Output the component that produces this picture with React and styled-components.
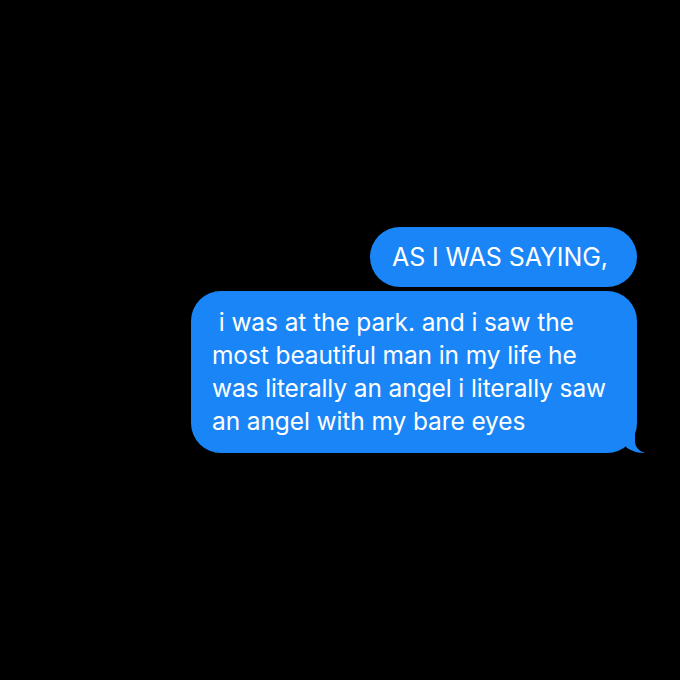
import React from "react";
import styled, { createGlobalStyle } from "styled-components";

const Global = createGlobalStyle`
  html, body {
    margin: 0;
    background: #000;
  }
`;

const Screen = styled.div`
  width: 680px;
  height: 680px;
  background: #000;
  display: flex;
  flex-direction: column;
  align-items: flex-end;
  gap: 4px;
  padding: 227px 43px 0 0;
  box-sizing: border-box;
  font-family: Inter, "Liberation Sans", sans-serif;
`;

const Bubble = styled.div`
  position: relative;
  background: #1a85f7;
  color: #fff;
  font-size: ${(p) => p.size}px;
  line-height: ${(p) => p.lh}px;
  letter-spacing: -0.1px;
  border-radius: 30px;
  padding: ${(p) => p.pad};
  width: ${(p) => p.w}px;
  box-sizing: border-box;
  white-space: pre-wrap;
`;

const Tail = styled.svg`
  position: absolute;
  right: -9px;
  bottom: 0;
`;

const App = () => {
  return (
    <>
      <Global />
      <Screen>
        <Bubble w={267} size={25} lh={32} pad="14px 0 14px 22px">
          AS I WAS SAYING,
        </Bubble>
        <Bubble w={446} size={24.5} lh={33} pad="15px 6px 15px 21px">
          {" i was at the park. and i saw the\nmost beautiful man in my life he\nwas literally an angel i literally saw\nan angel with my bare eyes"}
          <Tail width="20" height="20" viewBox="0 0 20 20">
            <path d="M0 0 L9 0 L9 8 C9 14 13 18 19 20 C14 20 6 19 0 14 Z" fill="#1a85f7" />
          </Tail>
        </Bubble>
      </Screen>
    </>
  );
};

export default App;
